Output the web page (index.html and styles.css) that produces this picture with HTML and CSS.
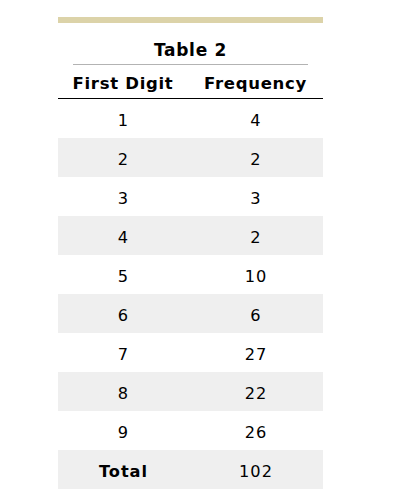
FILE: index.html
```html
<!DOCTYPE html>
<html>
<head>
<meta charset="utf-8">
<link rel="stylesheet" href="styles.css">
</head>
<body>
<div class="wrap">
  <table class="freq">
    <caption><span class="cap-text">Table 2</span></caption>
    <colgroup><col class="c1"><col class="c2"></colgroup>
    <thead>
      <tr><th>First Digit</th><th>Frequency</th></tr>
    </thead>
    <tbody>
      <tr><td>1</td><td>4</td></tr>
      <tr><td>2</td><td>2</td></tr>
      <tr><td>3</td><td>3</td></tr>
      <tr><td>4</td><td>2</td></tr>
      <tr><td>5</td><td>10</td></tr>
      <tr><td>6</td><td>6</td></tr>
      <tr><td>7</td><td>27</td></tr>
      <tr><td>8</td><td>22</td></tr>
      <tr><td>9</td><td>26</td></tr>
      <tr class="total"><td>Total</td><td>102</td></tr>
    </tbody>
  </table>
</div>
</body>
</html>
```
FILE: styles.css
```css
html, body {
  margin: 0;
  padding: 0;
  background: #ffffff;
}
body {
  font-family: "DejaVu Sans", Verdana, sans-serif;
  color: #000;
}
.wrap {
  margin: 17px 0 0 58px;
  width: 265px;
  border-top: 6px solid #dcd3a9;
}
.freq {
  width: 265px;
  border-collapse: collapse;
  table-layout: fixed;
}
.c1 { width: 130px; }
.c2 { width: 135px; }
.freq caption {
  padding: 16px 15px 0;
  font-weight: bold;
  font-size: 17px;
  line-height: 22px;
  letter-spacing: 0.7px;
}
.cap-text {
  display: block;
  padding-bottom: 3px;
  border-bottom: 1px solid #b3b3b3;
}
.freq th {
  font-size: 16.5px;
  font-weight: bold;
  line-height: 20px;
  padding: 9px 0 4px;
  text-align: center;
  letter-spacing: 0.7px;
  border-bottom: 1px solid #000;
}
.freq td {
  font-size: 16.2px;
  height: 39px;
  line-height: 20px;
  padding: 5px 0 0;
  text-align: center;
  letter-spacing: 1px;
  text-indent: 1px;
  box-sizing: border-box;
}
.freq tbody tr:nth-child(even) td {
  background: #efefef;
}
.freq .total td:first-child {
  font-weight: bold;
  letter-spacing: 1px;
}
```
